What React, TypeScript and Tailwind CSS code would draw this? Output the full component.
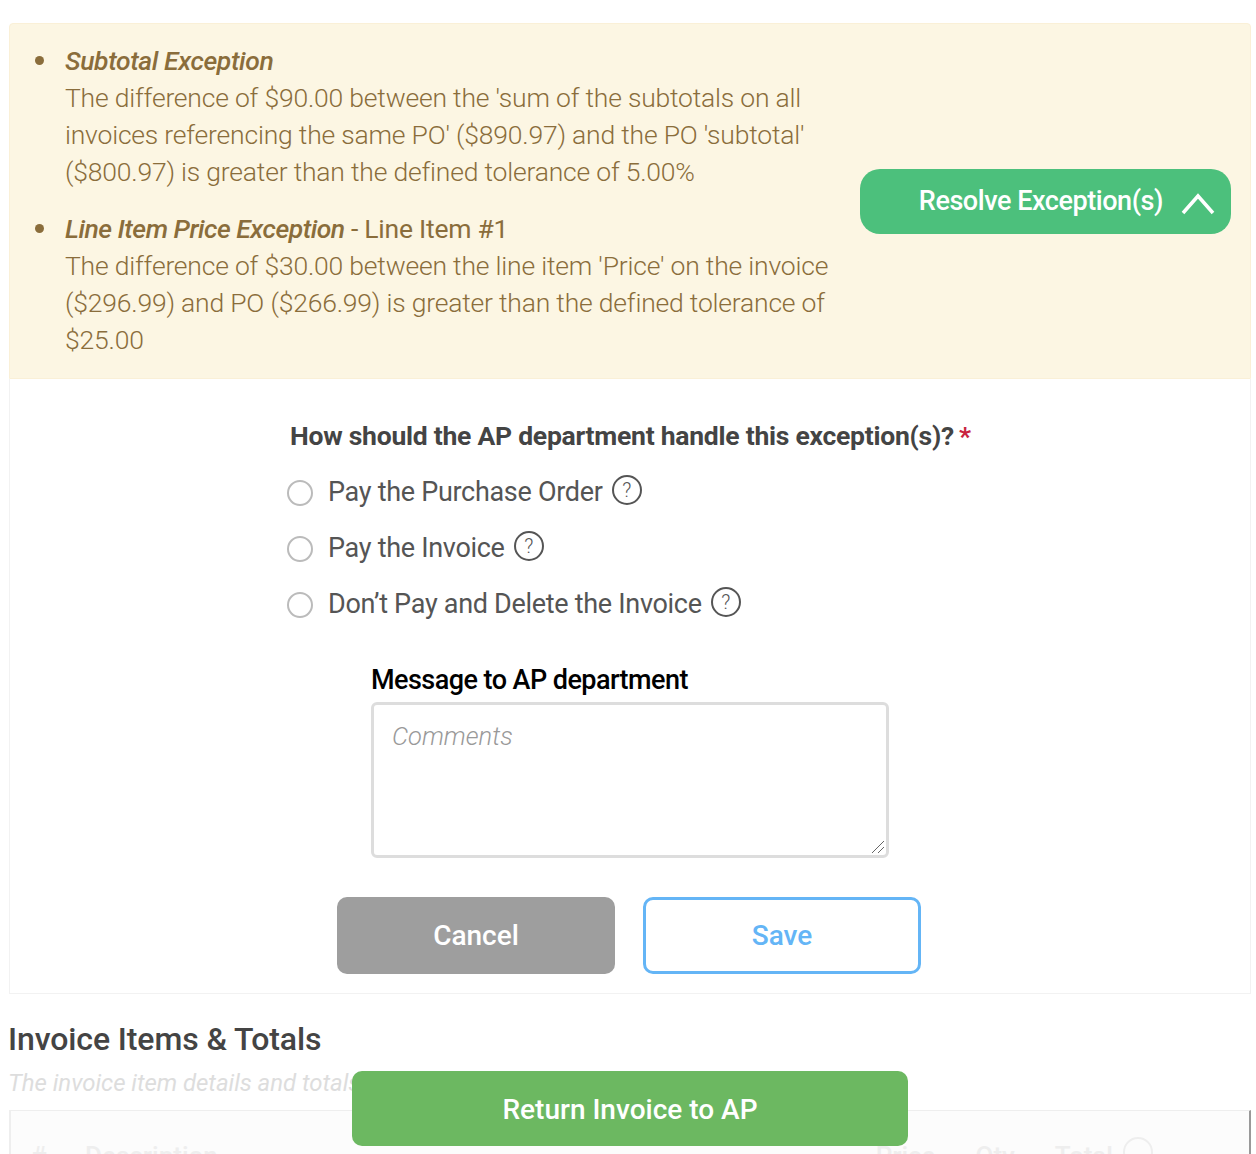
const font = { fontFamily: 'Roboto, "Liberation Sans", sans-serif' };

const options = ['Pay the Purchase Order', 'Pay the Invoice', 'Don’t Pay and Delete the Invoice'];

function HelpIcon() {
  return (
    <span className="ml-[9px] -mt-[5px] flex h-[30px] w-[30px] shrink-0 items-center justify-center rounded-full border-2 border-[#555] text-[20px] leading-none font-light text-[#555]">
      ?
    </span>
  );
}

function Bullet() {
  return <span className="mt-[14px] mr-[21px] h-[9px] w-[9px] shrink-0 rounded-full bg-[#8a6d3b]" />;
}

export default function App() {
  return (
    <div className="relative h-[1154px] w-[1256px] overflow-hidden bg-white" style={font}>
      <div className="ml-[9px] w-[1242px] pt-[23px]">
        <div className="flex h-[356px] justify-between rounded-t border border-[#faf0d7] bg-[#fcf6e3] pr-[19px] pl-[25px] text-[#8a6d3b]">
          <ul className="mt-[18px] w-[810px] self-start text-[26.5px] leading-[37px] font-light tracking-[-0.2px]">
            <li className="mb-[20px] flex">
              <Bullet />
              <div>
                <em className="font-medium tracking-[-0.4px]">Subtotal Exception</em>
                <br />
                The difference of $90.00 between the 'sum of the subtotals on all invoices referencing the same PO' ($890.97) and the PO 'subtotal' ($800.97) is greater than the defined tolerance of 5.00%
              </div>
            </li>
            <li className="flex">
              <Bullet />
              <div>
                <em className="font-medium tracking-[-0.5px]">Line Item Price Exception</em> <span className="font-normal tracking-[-0.25px]">- Line Item #1</span>
                <br />
                The difference of $30.00 between the line item 'Price' on the invoice ($296.99) and PO ($266.99) is greater than the defined tolerance of $25.00
              </div>
            </li>
          </ul>
          <button className="mt-[145px] flex h-[65px] w-[371px] items-center justify-end self-start rounded-[20px] bg-[#4cc07c] pr-[16px] text-[27px] font-medium tracking-[-0.45px] text-white">
            Resolve Exception(s)
            <svg className="mt-[4px] ml-[18px]" width="34" height="24" viewBox="0 0 34 24" fill="none" stroke="currentColor" strokeWidth="3.5">
              <path d="M2 21 17 4l15 17" />
            </svg>
          </button>
        </div>

        <div className="flex h-[615px] flex-col border-x border-b border-[#f2f2f2] pt-[37px]">
          <div className="pl-[280px] text-[26.5px] leading-[40px] font-bold tracking-[-0.25px] text-[#444]">
            How should the AP department handle this exception(s)?<span className="ml-[5px] text-[#c9243f]">*</span>
          </div>
          <div className="mt-[16px] flex flex-col gap-[16px] pl-[277px]">
            {options.map((option) => (
              <label key={option} className="flex h-[40px] items-center text-[27px] tracking-[-0.3px] text-[#555]">
                <span className="mt-[2px] mr-[15px] h-[26px] w-[26px] shrink-0 rounded-full border-2 border-[#bbb]" />
                {option}
                <HelpIcon />
              </label>
            ))}
          </div>

          <div className="mt-[36px] ml-[361px] w-[518px]">
            <div className="text-[27px] leading-[40px] font-medium tracking-[-0.55px] text-black">Message to AP department</div>
            <div className="relative mt-[2px]">
              <textarea
                placeholder="Comments"
                className="block h-[156px] w-full resize-none rounded-[6px] border-[3px] border-[#ddd] px-[18px] py-[12px] text-[25.5px] leading-[38px] font-light italic placeholder:text-[#999]"
              />
              <svg className="absolute right-[4px] bottom-[4px]" width="14" height="14" viewBox="0 0 14 14" fill="none" stroke="#666" strokeWidth="1">
                <path d="M1 13 13 1M7 13l6-6" />
              </svg>
            </div>
          </div>

          <div className="mt-[39px] ml-[327px] flex gap-[28px]">
            <button className="h-[77px] w-[278px] rounded-[10px] bg-[#9e9e9e] text-[28px] font-medium text-white">Cancel</button>
            <button className="h-[77px] w-[278px] rounded-[10px] border-[3px] border-[#64b5f6] bg-white text-[28px] font-medium text-[#64b5f6]">Save</button>
          </div>
        </div>

        <h2 className="mt-[24px] -ml-px text-[32px] leading-[42px] font-medium tracking-[-0.1px] text-[#444]">Invoice Items &amp; Totals</h2>
        <p className="mt-[3px] -ml-px text-[24px] leading-[40px] tracking-[-0.05px] italic text-[#ddd]">The invoice item details and totals</p>
        <div className="mt-[7px] flex h-[60px] border-x-2 border-t border-[#eee] border-r-[#999] bg-[#fcfcfc] pt-[26px] pl-[20px] text-[26px] font-medium text-[#eee]">
          <span className="w-[54px]">#</span>
          <span>Description</span>
          <span className="ml-auto">Price</span>
          <span className="ml-[40px]">Qty</span>
          <span className="ml-[40px]">Total</span>
          <span className="mr-[96px] ml-[10px] h-[30px] w-[30px] rounded-full border-2 border-[#eee]" />
        </div>
      </div>

      <button className="absolute top-[1071px] left-[352px] h-[75px] w-[556px] rounded-[10px] bg-[#6cb861] pt-[2px] text-[28px] font-medium text-white">
        Return Invoice to AP
      </button>
    </div>
  );
}
